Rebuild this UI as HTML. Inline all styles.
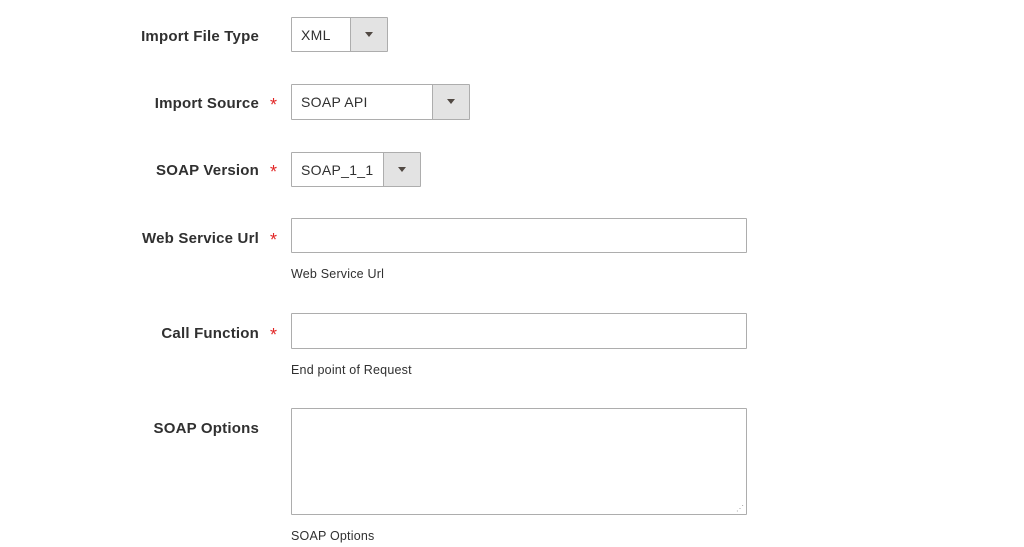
<!DOCTYPE html>
<html><head><style>
body{margin:0;width:1024px;height:547px;background:#fff;font-family:"Liberation Sans",sans-serif;color:#303030;position:relative;overflow:hidden}
.l{position:absolute;right:765px;font-weight:bold;font-size:15px;white-space:nowrap;letter-spacing:0.2px}
.s{position:absolute;left:270px;color:#e22626;font-size:18px}
.b{position:absolute;left:291px;border:1px solid #adadad;background:#fff;box-sizing:border-box;border-radius:1px}
.sel .t{position:absolute;left:9px;top:9px;font-size:14px;letter-spacing:0.3px}
.sel .a{position:absolute;right:0;top:0;bottom:0;background:#e3e3e3;border-left:1px solid #adadad}
.sel .a:after{content:"";position:absolute;left:50%;top:50%;margin:-3px 0 0 -4px;border:4px solid transparent;border-top:5px solid #514943;border-bottom:0}
.h{position:absolute;left:291px;font-size:12.5px;letter-spacing:0.2px}
</style></head><body>
<div class="l" style="top:28px">Import File Type</div>
<div class="b sel" style="top:17px;width:97px;height:35px"><span class="t">XML</span><span class="a" style="width:36px"></span></div>

<div class="l" style="top:95px">Import Source</div><div class="s" style="top:95px">*</div>
<div class="b sel" style="top:84px;width:179px;height:36px"><span class="t">SOAP API</span><span class="a" style="width:36px"></span></div>

<div class="l" style="top:162px">SOAP Version</div><div class="s" style="top:162px">*</div>
<div class="b sel" style="top:152px;width:130px;height:35px"><span class="t">SOAP_1_1</span><span class="a" style="width:36px"></span></div>

<div class="l" style="top:230px">Web Service Url</div><div class="s" style="top:230px">*</div>
<div class="b" style="top:218px;width:456px;height:35px"></div>
<div class="h" style="top:267px">Web Service Url</div>

<div class="l" style="top:325px">Call Function</div><div class="s" style="top:325px">*</div>
<div class="b" style="top:313px;width:456px;height:36px"></div>
<div class="h" style="top:363px">End point of Request</div>

<div class="l" style="top:420px">SOAP Options</div>
<div class="b" style="top:408px;width:456px;height:107px"><span style="position:absolute;right:2px;bottom:1px;font-size:8px;color:#999">⋰</span></div>
<div class="h" style="top:529px">SOAP Options</div>
</body></html>
